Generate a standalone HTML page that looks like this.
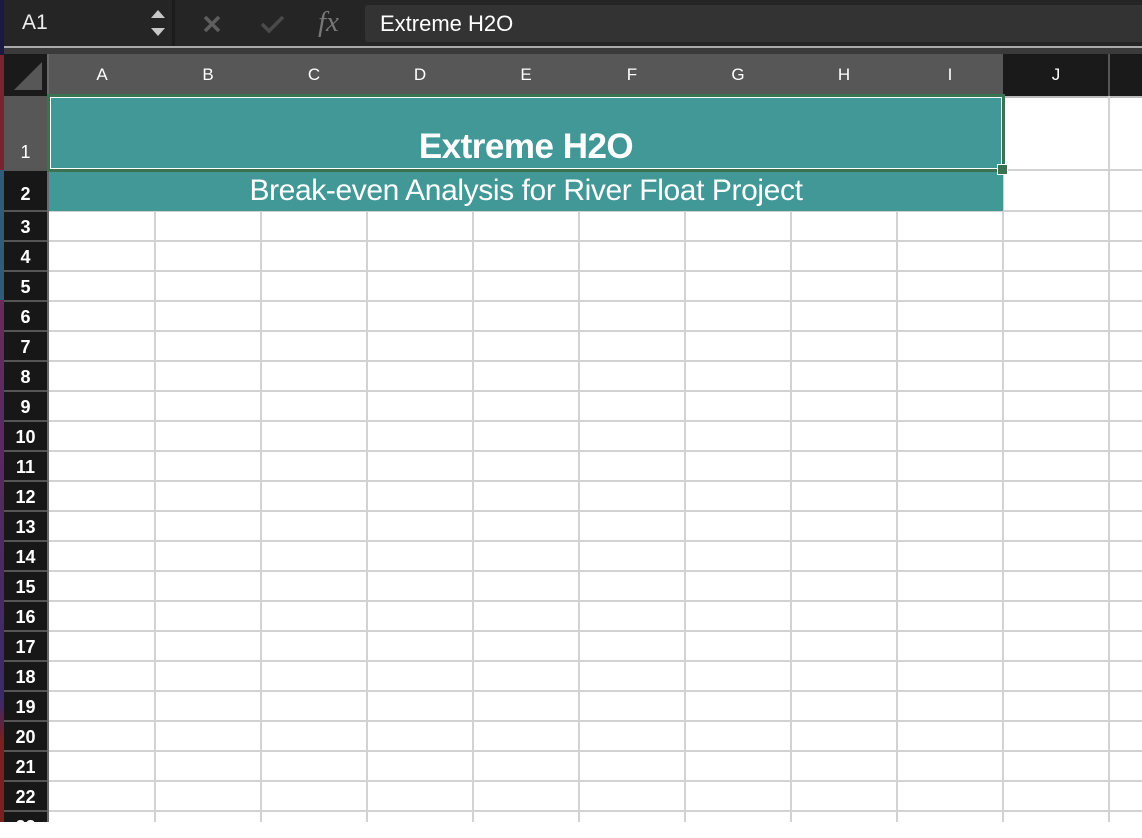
<!DOCTYPE html>
<html><head><style>
*{margin:0;padding:0;box-sizing:border-box}
body{width:1142px;height:822px;overflow:hidden;background:#fff;position:relative;font-family:"Liberation Sans",sans-serif}
.a{position:absolute}
.ch{position:absolute;top:54px;height:42px;line-height:42px;width:106px;text-align:center;color:#fff;font-size:17px}
.rh{position:absolute;left:4px;width:43px;text-align:center;color:#fff;font-size:18px;font-weight:bold}
</style></head><body>
<div class="a" style="left:0;top:0;width:4px;height:822px;background:linear-gradient(#1a1a40 0,#1a1a40 55px,#7a2430 55px,#7a2430 170px,#2f5c78 170px,#2f5c78 300px,#6a2a5a 300px,#3a2a6a 700px,#7a2020 740px)"></div>
<div class="a" style="left:4px;top:0;width:1138px;height:46px;background:#252525"></div>
<div class="a" style="left:172px;top:0;width:3px;height:46px;background:#1c1c1c"></div>
<div class="a" style="left:22px;top:11px;color:#eee;font-size:21px">A1</div>
<svg class="a" style="left:148px;top:5px" width="20" height="36"><path d="M3 13 L10 5 L17 13Z M3 23 L10 31 L17 23Z" fill="#c8c8c8"/></svg>
<svg class="a" style="left:200px;top:12px" width="24" height="24"><path d="M5 5 L19 19 M19 5 L5 19" stroke="#5e5e5e" stroke-width="3.5"/></svg>
<svg class="a" style="left:258px;top:12px" width="30" height="24"><path d="M4 12 L11 19 L25 5" stroke="#4a4a4a" stroke-width="3.5" fill="none"/></svg>
<div class="a" style="left:318px;top:6px;color:#777;font-size:29px;font-style:italic;font-family:'Liberation Serif',serif">fx</div>
<div class="a" style="left:365px;top:5px;width:777px;height:37px;background:#333;border-radius:3px 0 0 3px"></div>
<div class="a" style="left:380px;top:11px;color:#fff;font-size:22px">Extreme H2O</div>
<div class="a" style="left:4px;top:46px;width:1138px;height:2px;background:#aaa"></div>
<div class="a" style="left:4px;top:48px;width:1138px;height:6px;background:#3a3a3a"></div>
<div class="a" style="left:4px;top:54px;width:45px;height:42px;background:#1a1a1a"></div>
<svg class="a" style="left:12px;top:60px" width="32" height="32"><path d="M2 30 L30 30 L30 2Z" fill="#575757"/></svg>
<div class="a" style="left:47px;top:54px;width:2px;height:768px;background:#6a6a6a"></div>
<div class="a" style="left:49px;top:54px;width:954px;height:42px;background:#575757"></div>
<div class="a" style="left:1003px;top:54px;width:139px;height:42px;background:#1a1a1a"></div>
<div class="a" style="left:1108px;top:54px;width:2px;height:42px;background:#555"></div>
<div class="a" style="left:1003px;top:96px;width:139px;height:2px;background:#bbb"></div>
<div class="ch" style="left:49px">A</div><div class="ch" style="left:155px">B</div><div class="ch" style="left:261px">C</div><div class="ch" style="left:367px">D</div><div class="ch" style="left:473px">E</div><div class="ch" style="left:579px">F</div><div class="ch" style="left:685px">G</div><div class="ch" style="left:791px">H</div><div class="ch" style="left:897px">I</div><div class="ch" style="left:1003px">J</div>
<div class="a" style="left:4px;top:96px;width:43px;height:726px;background:#171717"></div>
<div class="a" style="left:4px;top:96px;width:43px;height:73px;background:#575757"></div>
<div class="a" style="left:4px;top:210px;width:43px;height:612px;background:repeating-linear-gradient(#555 0,#555 2px,transparent 2px,transparent 30px)"></div>
<div class="a" style="left:4px;top:169px;width:43px;height:2px;background:#555"></div>
<div class="a" style="left:49px;top:210px;width:1093px;height:612px;background:repeating-linear-gradient(#d2d2d2 0,#d2d2d2 2px,transparent 2px,transparent 30px)"></div>
<div class="a" style="left:154px;top:96px;width:988px;height:726px;background:repeating-linear-gradient(90deg,#d2d2d2 0,#d2d2d2 2px,transparent 2px,transparent 106px)"></div>
<div class="a" style="left:1003px;top:169px;width:139px;height:2px;background:#d2d2d2"></div>
<div class="a" style="left:49px;top:96px;width:954px;height:115px;background:#429797"></div>
<div class="a" style="left:47px;top:94px;width:958px;height:78px;border:3px solid #3b7350"></div>
<div class="a" style="left:50px;top:97px;width:952px;height:72px;border:1px solid #fff"></div>
<div class="a" style="left:997px;top:164px;width:11px;height:11px;background:#3b7350;border:1px solid #fff"></div>
<div class="a" style="left:49px;top:127px;width:954px;text-align:center;color:#fff;font-size:35px;font-weight:bold;letter-spacing:-0.5px">Extreme H2O</div>
<div class="a" style="left:49px;top:174px;width:954px;text-align:center;color:#fff;font-size:30px;letter-spacing:-0.4px">Break-even Analysis for River Float Project</div>
<div class="rh" style="top:142px;font-weight:normal">1</div>
<div class="rh" style="top:184px">2</div>
<div class="rh" style="top:217px">3</div><div class="rh" style="top:247px">4</div><div class="rh" style="top:277px">5</div><div class="rh" style="top:307px">6</div><div class="rh" style="top:337px">7</div><div class="rh" style="top:367px">8</div><div class="rh" style="top:397px">9</div><div class="rh" style="top:427px">10</div><div class="rh" style="top:457px">11</div><div class="rh" style="top:487px">12</div><div class="rh" style="top:517px">13</div><div class="rh" style="top:547px">14</div><div class="rh" style="top:577px">15</div><div class="rh" style="top:607px">16</div><div class="rh" style="top:637px">17</div><div class="rh" style="top:667px">18</div><div class="rh" style="top:697px">19</div><div class="rh" style="top:727px">20</div><div class="rh" style="top:757px">21</div><div class="rh" style="top:787px">22</div><div class="rh" style="top:817px">23</div>
</body></html>
